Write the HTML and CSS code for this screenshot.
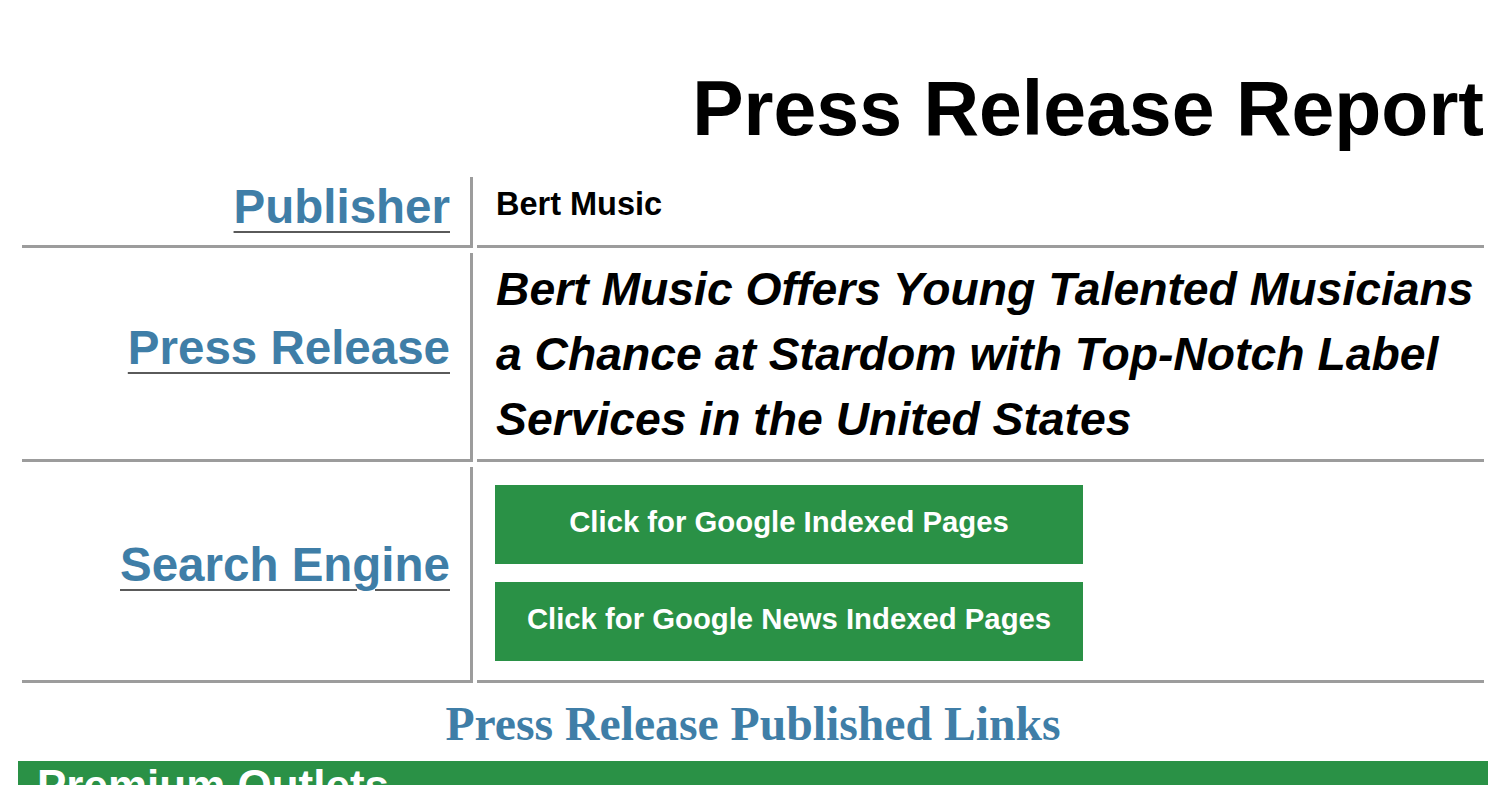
FILE: index.html
```html
<!DOCTYPE html>
<html lang="en">
<head>
<meta charset="utf-8">
<title>Press Release Report</title>
<link rel="stylesheet" href="styles.css">
</head>
<body>
<div class="page">
  <h1 class="title">Press Release Report</h1>
  <div class="report">
    <div class="cell label first"><a href="#" class="label-link">Publisher</a></div>
    <div class="cell value first"><span class="publisher">Bert Music</span></div>

    <div class="cell label"><a href="#" class="label-link">Press Release</a></div>
    <div class="cell value"><span class="release-title">Bert Music Offers Young Talented Musicians a Chance at Stardom with Top-Notch Label Services in the United States</span></div>

    <div class="cell label"><a href="#" class="label-link">Search Engine</a></div>
    <div class="cell value buttons">
      <a href="#" class="btn">Click for Google Indexed Pages</a>
      <a href="#" class="btn">Click for Google News Indexed Pages</a>
    </div>
  </div>
  <h2 class="links-heading">Press Release Published Links</h2>
  <div class="outlet-bar">Premium Outlets</div>
</div>
</body>
</html>
```

FILE: styles.css
```css
html, body {
  margin: 0;
  padding: 0;
  background: #ffffff;
}

body {
  font-family: "Liberation Sans", Arial, sans-serif;
  color: #000;
  overflow: hidden;
}

.page {
  margin-left: 18px;
  width: 1470px;
}

.title {
  margin: 0;
  padding: 65px 4px 0 0;
  text-align: right;
  font-size: 77px;
  font-weight: bold;
  line-height: 86px;
  height: 86px;
  margin-bottom: 22px;
}

.report {
  display: grid;
  grid-template-columns: 451px 1fr;
  gap: 5px 4px;
  padding: 4px;
}

.cell {
  display: flex;
  align-items: center;
  border-bottom: 3px solid #9c9c9c;
}

.label {
  justify-content: flex-end;
  border-right: 3px solid #9c9c9c;
  padding-right: 20px;
  padding-bottom: 18px;
}

.label.first {
  padding-bottom: 9px;
}

.label-link {
  font-size: 47.5px;
  font-weight: bold;
  color: #3f7ea7;
  text-decoration: underline;
  text-decoration-color: #5a5a5a;
  text-decoration-thickness: 2px;
  text-underline-offset: 8px;
}

.value {
  padding-left: 19px;
}

.cell.first {
  min-height: 71px;
  box-sizing: border-box;
}

.value.first {
  padding-bottom: 14px;
}

.publisher {
  font-size: 32.5px;
  font-weight: bold;
}

.release-title {
  font-size: 46.3px;
  font-weight: bold;
  font-style: italic;
  line-height: 65px;
  padding: 4px 0 7px;
}

.buttons {
  flex-direction: column;
  align-items: flex-start;
  gap: 18px;
  padding: 18px 0 19px 18px;
}

.btn {
  display: flex;
  align-items: center;
  justify-content: center;
  box-sizing: border-box;
  width: 588px;
  height: 79px;
  padding-bottom: 6px;
  background: #2a9146;
  color: #ffffff;
  font-size: 29.3px;
  font-weight: bold;
  text-decoration: none;
}

.links-heading {
  margin: 9px 0 10px;
  text-align: center;
  font-family: "Liberation Serif", "Times New Roman", serif;
  font-size: 47.7px;
  font-weight: bold;
  color: #3f7ea7;
  line-height: 55px;
}

.outlet-bar {
  background: #2a9146;
  color: #ffffff;
  font-size: 44px;
  font-weight: bold;
  padding: 0 19px;
  line-height: 50px;
  height: 60px;
}
```
